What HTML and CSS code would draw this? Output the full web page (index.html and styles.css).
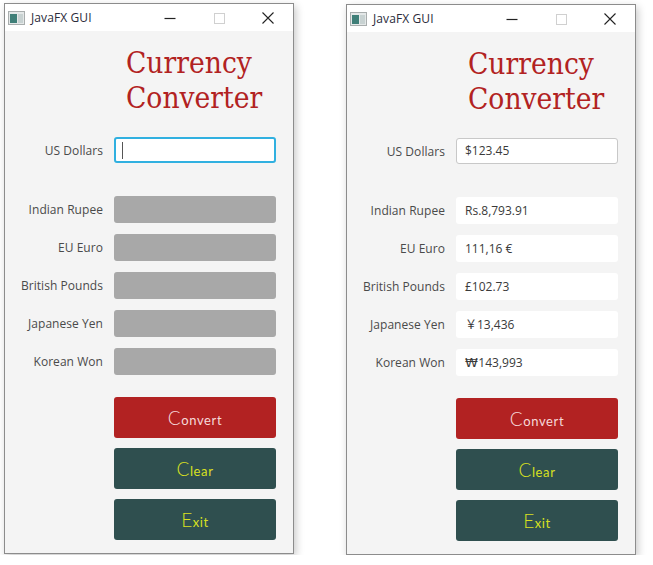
FILE: index.html
```html
<!DOCTYPE html>
<html lang="en">
<head>
    <meta charset="UTF-8">
    <meta name="viewport" content="width=device-width, initial-scale=1.0">
    <title>JavaFX GUI</title>
    <link rel="stylesheet" href="styles.css">
</head>
<body>

    <div class="desktop">

        <div class="window">
            <div class="titlebar">
                <svg class="app-icon" width="17" height="14" viewBox="0 0 17 14">
                    <rect x="0.5" y="0.5" width="16" height="13" fill="#e4e8e8" stroke="#a8adad"/>
                    <rect x="2" y="3" width="7" height="9" fill="#3f7f78"/>
                    <rect x="10" y="3" width="5" height="9" fill="#c8d2d2"/>
                </svg>
                <span class="app-title">JavaFX GUI</span>
                <div class="controls">
                    <svg width="14" height="14" viewBox="0 0 14 14"><path d="M1.5 7.5h11" stroke="#222" stroke-width="1.2"/></svg>
                    <svg width="14" height="14" viewBox="0 0 14 14"><rect x="2.5" y="2.5" width="10" height="10" fill="none" stroke="#d0d0d0"/></svg>
                    <svg width="14" height="14" viewBox="0 0 14 14"><path d="M1.5 1.5l11 11M12.5 1.5l-11 11" stroke="#222" stroke-width="1.1"/></svg>
                </div>
            </div>
            <div class="content">
                <h1 class="heading">Currency<br>Converter</h1>
                <div class="row row-input">
                    <label>US Dollars</label>
                    <div class="field focused"><span class="caret"></span></div>
                </div>
                <div class="results">
                    <div class="row"><label>Indian Rupee</label><div class="field disabled"></div></div>
                    <div class="row"><label>EU Euro</label><div class="field disabled"></div></div>
                    <div class="row"><label>British Pounds</label><div class="field disabled"></div></div>
                    <div class="row"><label>Japanese Yen</label><div class="field disabled"></div></div>
                    <div class="row"><label>Korean Won</label><div class="field disabled"></div></div>
                </div>
                <div class="buttons">
                    <div class="btn btn-red">Convert</div>
                    <div class="btn btn-dark">Clear</div>
                    <div class="btn btn-dark">Exit</div>
                </div>
            </div>
        </div>

        <div class="window second">
            <div class="titlebar">
                <svg class="app-icon" width="17" height="14" viewBox="0 0 17 14">
                    <rect x="0.5" y="0.5" width="16" height="13" fill="#e4e8e8" stroke="#a8adad"/>
                    <rect x="2" y="3" width="7" height="9" fill="#3f7f78"/>
                    <rect x="10" y="3" width="5" height="9" fill="#c8d2d2"/>
                </svg>
                <span class="app-title">JavaFX GUI</span>
                <div class="controls">
                    <svg width="14" height="14" viewBox="0 0 14 14"><path d="M1.5 7.5h11" stroke="#222" stroke-width="1.2"/></svg>
                    <svg width="14" height="14" viewBox="0 0 14 14"><rect x="2.5" y="2.5" width="10" height="10" fill="none" stroke="#d0d0d0"/></svg>
                    <svg width="14" height="14" viewBox="0 0 14 14"><path d="M1.5 1.5l11 11M12.5 1.5l-11 11" stroke="#222" stroke-width="1.1"/></svg>
                </div>
            </div>
            <div class="content">
                <h1 class="heading">Currency<br>Converter</h1>
                <div class="row row-input">
                    <label>US Dollars</label>
                    <div class="field outlined">$123.45</div>
                </div>
                <div class="results">
                    <div class="row"><label>Indian Rupee</label><div class="field">Rs.8,793.91</div></div>
                    <div class="row"><label>EU Euro</label><div class="field">111,16 €</div></div>
                    <div class="row"><label>British Pounds</label><div class="field">£102.73</div></div>
                    <div class="row"><label>Japanese Yen</label><div class="field">￥13,436</div></div>
                    <div class="row"><label>Korean Won</label><div class="field"><span class="won">₩</span>143,993</div></div>
                </div>
                <div class="buttons">
                    <div class="btn btn-red">Convert</div>
                    <div class="btn btn-dark">Clear</div>
                    <div class="btn btn-dark">Exit</div>
                </div>
            </div>
        </div>

    </div>

</body>
</html>
```

FILE: styles.css
```css
* {
    box-sizing: border-box;
}

body {
    margin: 0;
    background-color: #fff;
    font-family: "Open Sans", "Noto Sans CJK JP", sans-serif;
}

.desktop {
    display: flex;
    gap: 52px;
    padding: 3px 0 0 4px;
}

.window {
    width: 290px;
    height: 551px;
    background-color: #f4f4f4;
    border: 1px solid #8c8c8c;
    box-shadow: 2px 3px 8px rgba(0, 0, 0, .22);
}

.second {
    margin-top: 1px;
}

.titlebar {
    display: flex;
    align-items: center;
    height: 27px;
    padding-left: 3px;
    background-color: #fff;
}

.app-title {
    margin-left: 6px;
    font-size: 12px;
    letter-spacing: .1px;
    color: #2b2b3a;
}

.controls {
    display: flex;
    gap: 35px;
    margin-left: auto;
    margin-right: 18px;
}

.content {
    padding: 15px 17px 0 0;
}

.heading {
    margin: 0 0 21px 121px;
    font-family: "DejaVu Serif", serif;
    font-stretch: condensed;
    font-size: 29.6px;
    font-weight: normal;
    line-height: 35px;
    color: #b22222;
}

.row {
    display: grid;
    grid-template-columns: 98px 162px;
    column-gap: 11px;
    align-items: center;
}

.row label {
    text-align: right;
    font-size: 12px;
    letter-spacing: .05px;
    color: #4a4a4a;
}

.row-input .field {
    height: 26px;
}

.field {
    height: 27px;
    padding-left: 9px;
    border-radius: 3px;
    background-color: #fff;
    font-size: 12px;
    line-height: 27px;
    color: #3a3a3a;
}

.won {
    font-family: "DejaVu Sans", sans-serif;
    font-size: 13px;
    letter-spacing: .5px;
}

.outlined {
    border: 1px solid #c8c8c8;
    line-height: 24px;
    padding-left: 8px;
}

.focused {
    display: flex;
    align-items: center;
    border: 2px solid #30b0e0;
    padding-left: 6px;
}

.caret {
    width: 1px;
    height: 17px;
    background-color: #555;
}

.disabled {
    background-color: #a8a8a8;
}

.results {
    display: flex;
    flex-direction: column;
    gap: 11px;
    margin-top: 33px;
}

.buttons {
    display: flex;
    flex-direction: column;
    gap: 10px;
    margin: 22px 0 0 109px;
}

.btn {
    height: 41px;
    border-radius: 3px;
    text-align: center;
    font-family: "Lato", sans-serif;
    font-size: 13px;
    line-height: 42px;
    letter-spacing: .6px;
}

.btn::first-letter {
    font-size: 19px;
    font-weight: 300;
}

.btn-red {
    background-color: #b22222;
    color: #f6d9d9;
}

.btn-dark {
    background-color: #2f4f4f;
    color: #d9e021;
}
```
